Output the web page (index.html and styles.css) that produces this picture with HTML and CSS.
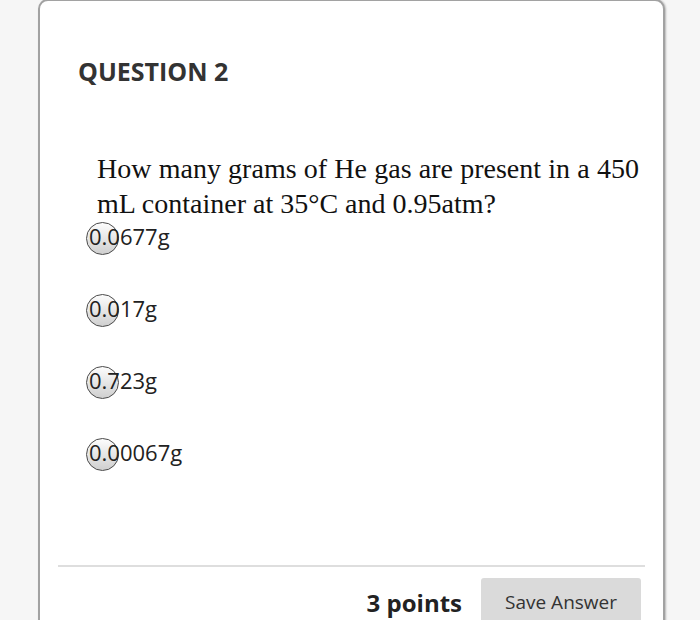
FILE: index.html
```html
<!DOCTYPE html>
<html lang="en">
<head>
    <meta charset="UTF-8">
    <meta name="viewport" content="width=device-width, initial-scale=1.0">
    <title>Question 2</title>
    <link rel="stylesheet" href="styles.css">
</head>
<body>
    <div class="card">
        <h2 class="q-title">QUESTION 2</h2>
        <p class="q-text">How many grams of He gas are present in a 450 mL container at 35°C and 0.95atm?</p>
        <div class="answers">
            <label class="answer"><span class="radio"></span>0.0677g</label>
            <label class="answer"><span class="radio"></span>0.017g</label>
            <label class="answer"><span class="radio"></span>0.723g</label>
            <label class="answer"><span class="radio"></span>0.00067g</label>
        </div>
        <div class="q-footer">
            <span class="points">3 points</span>
            <button class="save-btn">Save Answer</button>
        </div>
    </div>
</body>
</html>
```

FILE: styles.css
```css
body {
    margin: 0;
    background-color: #f6f6f6;
    font-family: "Open Sans", "Liberation Sans", sans-serif;
    color: #333;
    overflow: hidden;
}
.card {
    margin: -1px 0 0 38px;
    width: 627px;
    height: 700px;
    padding: 0 18px;
    box-sizing: border-box;
    background: #fff;
    border: 2px solid #a2a2a2;
    border-radius: 10px;
    box-shadow: 1px 0 2px rgba(0, 0, 0, 0.25);
}
.q-title {
    margin: 53px 0 0 20px;
    font-size: 25px;
    font-weight: 700;
    line-height: 34px;
    color: #333;
}
.q-text {
    margin: 63px 6px 0 39px;
    font-family: "Liberation Serif", "Times New Roman", serif;
    font-size: 28px;
    line-height: 35px;
    text-align: justify;
    color: #111;
}
.answers {
    display: flex;
    flex-direction: column;
    gap: 42px;
    margin: 0 0 0 31px;
}
.answer {
    position: relative;
    display: block;
    isolation: isolate;
    font-size: 22px;
    line-height: 30px;
    color: #222;
}
.radio {
    position: absolute;
    z-index: -1;
    left: -3px;
    top: 1px;
    width: 31px;
    height: 31px;
    border: 1.5px solid #4a4a4a;
    border-radius: 50%;
    background: linear-gradient(#fdfdfd, #cfcfcf);
}
.q-footer {
    display: flex;
    justify-content: flex-end;
    align-items: center;
    gap: 19px;
    margin-top: 98px;
    padding: 11px 4px 0 0;
    border-top: 2px solid #dedede;
}
.points {
    font-size: 24px;
    font-weight: 700;
    color: #222;
}
.save-btn {
    padding: 12px 24px;
    font-family: "Open Sans", "Liberation Sans", sans-serif;
    font-size: 19px;
    line-height: 24px;
    color: #333;
    background: #dadada;
    border: none;
    border-radius: 3px;
}
```
